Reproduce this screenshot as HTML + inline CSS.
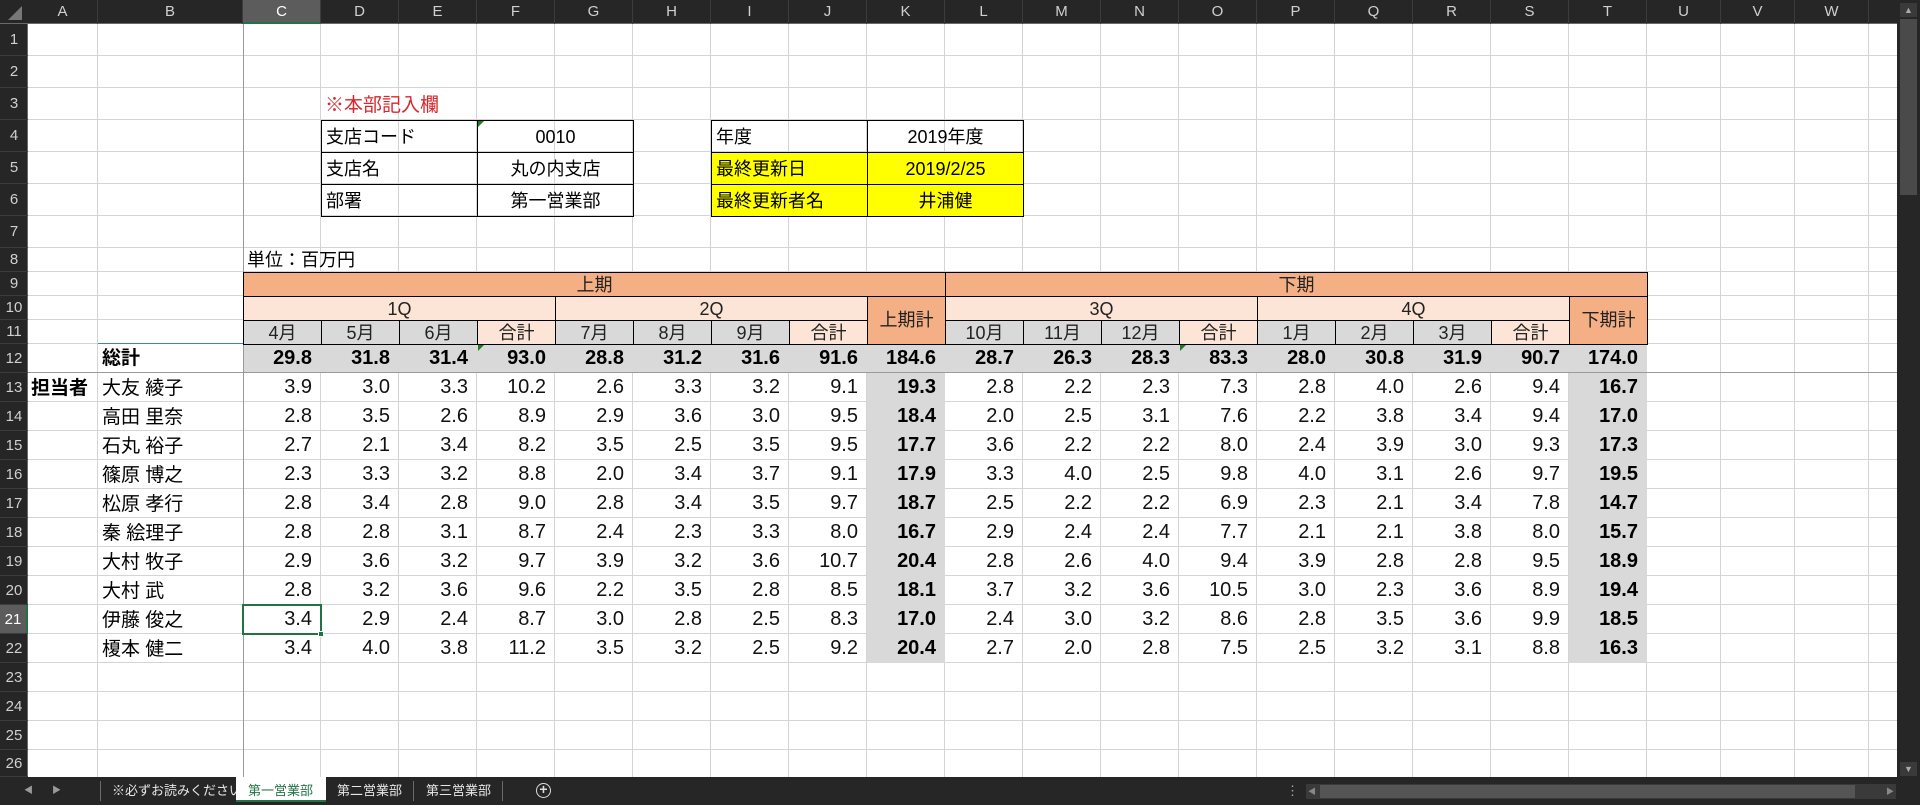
<!DOCTYPE html>
<html><head><meta charset="utf-8">
<style>
*{margin:0;padding:0;box-sizing:border-box}
body{width:1920px;height:805px;overflow:hidden;background:#fff;position:relative;font-family:"Liberation Sans","Noto Sans CJK JP",sans-serif;color:#000}
.a{position:absolute}
.vl{position:absolute;top:24px;height:753px;width:1px;background:#d4d4d4}
.hl{position:absolute;left:28px;width:1869px;height:1px;background:#d4d4d4}
.colh{position:absolute;top:0;height:24px;color:#d0d0d0;font-size:15px;line-height:24px;text-align:center;border-right:1px solid #3c3c3c}
.rowh{position:absolute;left:0;width:28px;color:#d0d0d0;font-size:15px;text-align:center;border-bottom:1px solid #3c3c3c;display:flex;align-items:center;justify-content:center}
.r{position:absolute;left:243px;display:flex;height:29px;font-family:"Liberation Sans Narrow","Liberation Sans",sans-serif;font-size:20px;line-height:1;color:#111}
.r span{width:78px;text-align:right;padding-right:9px;display:flex;align-items:flex-end;justify-content:flex-end;padding-bottom:5px}
.r span.b{font-weight:bold;color:#000}
.jp{font-family:"Liberation Sans","Noto Sans CJK JP",sans-serif;font-size:19px;line-height:1}
.box{position:absolute;border:1px solid #000;display:flex;align-items:center;font-family:"Liberation Sans","Noto Sans CJK JP",sans-serif;font-size:18px;line-height:1}
.hd{position:absolute;border:1px solid #000;display:flex;align-items:flex-end;justify-content:center;padding-bottom:2px;font-family:"Liberation Sans","Noto Sans CJK JP",sans-serif;font-size:18px;line-height:1;color:#222}
.or{background:#f4b084}.lt{background:#fce4d6}.gr{background:#d9d9d9}.ye{background:#ffff00}
.nm{position:absolute;left:102px;font-family:"Liberation Sans","Noto Sans CJK JP",sans-serif;font-size:19px;line-height:1}
.tri{position:absolute;width:0;height:0;border-top:6px solid #1e7b1e;border-right:6px solid transparent}
.tab{position:absolute;top:777px;height:28px;color:#e6e6e6;font-size:13px;line-height:27px;font-family:"Liberation Sans","Noto Sans CJK JP",sans-serif;white-space:nowrap}
</style></head><body>

<div class="vl" style="left:97px"></div>
<div class="vl" style="left:320px"></div><div class="vl" style="left:398px"></div><div class="vl" style="left:476px"></div><div class="vl" style="left:554px"></div><div class="vl" style="left:632px"></div><div class="vl" style="left:710px"></div><div class="vl" style="left:788px"></div><div class="vl" style="left:866px"></div><div class="vl" style="left:944px"></div><div class="vl" style="left:1022px"></div><div class="vl" style="left:1100px"></div><div class="vl" style="left:1178px"></div><div class="vl" style="left:1256px"></div><div class="vl" style="left:1334px"></div><div class="vl" style="left:1412px"></div><div class="vl" style="left:1490px"></div><div class="vl" style="left:1568px"></div><div class="vl" style="left:1646px"></div><div class="vl" style="left:1720px"></div><div class="vl" style="left:1794px"></div><div class="vl" style="left:1868px"></div>
<div class="hl" style="top:55px"></div><div class="hl" style="top:87px"></div><div class="hl" style="top:119px"></div><div class="hl" style="top:151px"></div><div class="hl" style="top:183px"></div><div class="hl" style="top:215px"></div><div class="hl" style="top:247px"></div><div class="hl" style="top:271px"></div><div class="hl" style="top:295px"></div><div class="hl" style="top:319px"></div><div class="hl" style="top:343px"></div>
<div class="hl" style="top:401px"></div><div class="hl" style="top:430px"></div><div class="hl" style="top:459px"></div><div class="hl" style="top:488px"></div><div class="hl" style="top:517px"></div><div class="hl" style="top:546px"></div><div class="hl" style="top:575px"></div><div class="hl" style="top:604px"></div><div class="hl" style="top:633px"></div><div class="hl" style="top:662px"></div><div class="hl" style="top:691px"></div><div class="hl" style="top:720px"></div><div class="hl" style="top:749px"></div>

<div class="a gr" style="left:243px;top:344px;width:1404px;height:29px"></div>
<div class="a gr" style="left:867px;top:373px;width:78px;height:290px"></div>
<div class="a gr" style="left:1569px;top:373px;width:78px;height:290px"></div>

<div class="a" style="left:243px;top:24px;width:1px;height:753px;background:#9a9a9a"></div>
<div class="a" style="left:28px;top:372px;width:1869px;height:1px;background:#9a9a9a"></div>
<div class="a" style="left:98px;top:343px;width:145px;height:1px;background:#4a7ccc"></div>

<div class="a jp" style="left:325px;top:96px;color:#d9262b;font-size:19px">※本部記入欄</div>

<div class="box" style="left:321px;top:120px;width:157px;height:33px;padding-left:4px">支店コード</div>
<div class="box" style="left:477px;top:120px;width:157px;height:33px;justify-content:center">0010</div>
<div class="box" style="left:321px;top:152px;width:157px;height:33px;padding-left:4px">支店名</div>
<div class="box" style="left:477px;top:152px;width:157px;height:33px;justify-content:center">丸の内支店</div>
<div class="box" style="left:321px;top:184px;width:157px;height:33px;padding-left:4px">部署</div>
<div class="box" style="left:477px;top:184px;width:157px;height:33px;justify-content:center">第一営業部</div>
<div class="tri" style="left:478px;top:121px"></div>

<div class="box" style="left:711px;top:120px;width:157px;height:33px;padding-left:4px">年度</div>
<div class="box" style="left:867px;top:120px;width:157px;height:33px;justify-content:center">2019年度</div>
<div class="box ye" style="left:711px;top:152px;width:157px;height:33px;padding-left:4px">最終更新日</div>
<div class="box ye" style="left:867px;top:152px;width:157px;height:33px;justify-content:center">2019/2/25</div>
<div class="box ye" style="left:711px;top:184px;width:157px;height:33px;padding-left:4px">最終更新者名</div>
<div class="box ye" style="left:867px;top:184px;width:157px;height:33px;justify-content:center">井浦健</div>

<div class="a jp" style="left:247px;top:251px;font-size:18px">単位：百万円</div>

<div class="hd or" style="left:243px;top:272px;width:703px;height:25px">上期</div>
<div class="hd or" style="left:945px;top:272px;width:703px;height:25px">下期</div>
<div class="hd lt" style="left:243px;top:296px;width:313px;height:25px">1Q</div>
<div class="hd lt" style="left:555px;top:296px;width:313px;height:25px">2Q</div>
<div class="hd or" style="left:867px;top:296px;width:79px;height:49px;align-items:center">上期計</div>
<div class="hd lt" style="left:945px;top:296px;width:313px;height:25px">3Q</div>
<div class="hd lt" style="left:1257px;top:296px;width:313px;height:25px">4Q</div>
<div class="hd or" style="left:1569px;top:296px;width:79px;height:49px;align-items:center">下期計</div>

<div class="hd gr" style="left:243px;top:320px;width:79px;height:25px">4月</div>
<div class="hd gr" style="left:321px;top:320px;width:79px;height:25px">5月</div>
<div class="hd gr" style="left:399px;top:320px;width:79px;height:25px">6月</div>
<div class="hd lt" style="left:477px;top:320px;width:79px;height:25px">合計</div>
<div class="hd gr" style="left:555px;top:320px;width:79px;height:25px">7月</div>
<div class="hd gr" style="left:633px;top:320px;width:79px;height:25px">8月</div>
<div class="hd gr" style="left:711px;top:320px;width:79px;height:25px">9月</div>
<div class="hd lt" style="left:789px;top:320px;width:79px;height:25px">合計</div>
<div class="hd gr" style="left:945px;top:320px;width:79px;height:25px">10月</div>
<div class="hd gr" style="left:1023px;top:320px;width:79px;height:25px">11月</div>
<div class="hd gr" style="left:1101px;top:320px;width:79px;height:25px">12月</div>
<div class="hd lt" style="left:1179px;top:320px;width:79px;height:25px">合計</div>
<div class="hd gr" style="left:1257px;top:320px;width:79px;height:25px">1月</div>
<div class="hd gr" style="left:1335px;top:320px;width:79px;height:25px">2月</div>
<div class="hd gr" style="left:1413px;top:320px;width:79px;height:25px">3月</div>
<div class="hd lt" style="left:1491px;top:320px;width:79px;height:25px">合計</div>
<div class="tri" style="left:478px;top:345px"></div>
<div class="tri" style="left:1180px;top:345px"></div>

<div class="nm" style="top:349px;font-weight:bold">総計</div>
<div class="r" style="top:344px"><span class="b">29.8</span><span class="b">31.8</span><span class="b">31.4</span><span class="b">93.0</span><span class="b">28.8</span><span class="b">31.2</span><span class="b">31.6</span><span class="b">91.6</span><span class="b">184.6</span><span class="b">28.7</span><span class="b">26.3</span><span class="b">28.3</span><span class="b">83.3</span><span class="b">28.0</span><span class="b">30.8</span><span class="b">31.9</span><span class="b">90.7</span><span class="b">174.0</span></div>

<div class="a jp" style="left:31px;top:379px;font-weight:bold;font-size:19px">担当者</div>

<div class="nm" style="top:379px">大友 綾子</div>
<div class="r" style="top:373px"><span>3.9</span><span>3.0</span><span>3.3</span><span>10.2</span><span>2.6</span><span>3.3</span><span>3.2</span><span>9.1</span><span class="b">19.3</span><span>2.8</span><span>2.2</span><span>2.3</span><span>7.3</span><span>2.8</span><span>4.0</span><span>2.6</span><span>9.4</span><span class="b">16.7</span></div>
<div class="nm" style="top:408px">高田 里奈</div>
<div class="r" style="top:402px"><span>2.8</span><span>3.5</span><span>2.6</span><span>8.9</span><span>2.9</span><span>3.6</span><span>3.0</span><span>9.5</span><span class="b">18.4</span><span>2.0</span><span>2.5</span><span>3.1</span><span>7.6</span><span>2.2</span><span>3.8</span><span>3.4</span><span>9.4</span><span class="b">17.0</span></div>
<div class="nm" style="top:437px">石丸 裕子</div>
<div class="r" style="top:431px"><span>2.7</span><span>2.1</span><span>3.4</span><span>8.2</span><span>3.5</span><span>2.5</span><span>3.5</span><span>9.5</span><span class="b">17.7</span><span>3.6</span><span>2.2</span><span>2.2</span><span>8.0</span><span>2.4</span><span>3.9</span><span>3.0</span><span>9.3</span><span class="b">17.3</span></div>
<div class="nm" style="top:466px">篠原 博之</div>
<div class="r" style="top:460px"><span>2.3</span><span>3.3</span><span>3.2</span><span>8.8</span><span>2.0</span><span>3.4</span><span>3.7</span><span>9.1</span><span class="b">17.9</span><span>3.3</span><span>4.0</span><span>2.5</span><span>9.8</span><span>4.0</span><span>3.1</span><span>2.6</span><span>9.7</span><span class="b">19.5</span></div>
<div class="nm" style="top:495px">松原 孝行</div>
<div class="r" style="top:489px"><span>2.8</span><span>3.4</span><span>2.8</span><span>9.0</span><span>2.8</span><span>3.4</span><span>3.5</span><span>9.7</span><span class="b">18.7</span><span>2.5</span><span>2.2</span><span>2.2</span><span>6.9</span><span>2.3</span><span>2.1</span><span>3.4</span><span>7.8</span><span class="b">14.7</span></div>
<div class="nm" style="top:524px">秦 絵理子</div>
<div class="r" style="top:518px"><span>2.8</span><span>2.8</span><span>3.1</span><span>8.7</span><span>2.4</span><span>2.3</span><span>3.3</span><span>8.0</span><span class="b">16.7</span><span>2.9</span><span>2.4</span><span>2.4</span><span>7.7</span><span>2.1</span><span>2.1</span><span>3.8</span><span>8.0</span><span class="b">15.7</span></div>
<div class="nm" style="top:553px">大村 牧子</div>
<div class="r" style="top:547px"><span>2.9</span><span>3.6</span><span>3.2</span><span>9.7</span><span>3.9</span><span>3.2</span><span>3.6</span><span>10.7</span><span class="b">20.4</span><span>2.8</span><span>2.6</span><span>4.0</span><span>9.4</span><span>3.9</span><span>2.8</span><span>2.8</span><span>9.5</span><span class="b">18.9</span></div>
<div class="nm" style="top:582px">大村 武</div>
<div class="r" style="top:576px"><span>2.8</span><span>3.2</span><span>3.6</span><span>9.6</span><span>2.2</span><span>3.5</span><span>2.8</span><span>8.5</span><span class="b">18.1</span><span>3.7</span><span>3.2</span><span>3.6</span><span>10.5</span><span>3.0</span><span>2.3</span><span>3.6</span><span>8.9</span><span class="b">19.4</span></div>
<div class="nm" style="top:611px">伊藤 俊之</div>
<div class="r" style="top:605px"><span>3.4</span><span>2.9</span><span>2.4</span><span>8.7</span><span>3.0</span><span>2.8</span><span>2.5</span><span>8.3</span><span class="b">17.0</span><span>2.4</span><span>3.0</span><span>3.2</span><span>8.6</span><span>2.8</span><span>3.5</span><span>3.6</span><span>9.9</span><span class="b">18.5</span></div>
<div class="nm" style="top:640px">榎本 健二</div>
<div class="r" style="top:634px"><span>3.4</span><span>4.0</span><span>3.8</span><span>11.2</span><span>3.5</span><span>3.2</span><span>2.5</span><span>9.2</span><span class="b">20.4</span><span>2.7</span><span>2.0</span><span>2.8</span><span>7.5</span><span>2.5</span><span>3.2</span><span>3.1</span><span>8.8</span><span class="b">16.3</span></div>

<div class="a" style="left:242px;top:604px;width:80px;height:31px;border:2px solid #217346"></div>
<div class="a" style="left:318px;top:631px;width:6px;height:6px;background:#217346;border:1px solid #fff"></div>

<div class="a" style="left:0;top:0;width:1920px;height:24px;background:#262626"></div>
<div class="a" style="left:0;top:23px;width:1897px;height:1px;background:#6a6a6a"></div>
<div class="a" style="left:8px;top:6px;width:0;height:0;border-left:14px solid transparent;border-bottom:14px solid #777"></div>
<div class="colh" style="left:28px;width:70px">A</div>
<div class="colh" style="left:98px;width:145px">B</div>
<div class="colh" style="left:243px;width:78px;background:#5c5c5c;color:#fff;border-bottom:2px solid #217346">C</div>
<div class="colh" style="left:321px;width:78px">D</div><div class="colh" style="left:399px;width:78px">E</div><div class="colh" style="left:477px;width:78px">F</div><div class="colh" style="left:555px;width:78px">G</div><div class="colh" style="left:633px;width:78px">H</div><div class="colh" style="left:711px;width:78px">I</div><div class="colh" style="left:789px;width:78px">J</div><div class="colh" style="left:867px;width:78px">K</div><div class="colh" style="left:945px;width:78px">L</div><div class="colh" style="left:1023px;width:78px">M</div><div class="colh" style="left:1101px;width:78px">N</div><div class="colh" style="left:1179px;width:78px">O</div><div class="colh" style="left:1257px;width:78px">P</div><div class="colh" style="left:1335px;width:78px">Q</div><div class="colh" style="left:1413px;width:78px">R</div><div class="colh" style="left:1491px;width:78px">S</div><div class="colh" style="left:1569px;width:78px">T</div><div class="colh" style="left:1647px;width:74px">U</div><div class="colh" style="left:1721px;width:74px">V</div><div class="colh" style="left:1795px;width:74px">W</div>

<div class="a" style="left:0;top:24px;width:28px;height:753px;background:#262626"></div>
<div class="a" style="left:27px;top:24px;width:1px;height:753px;background:#6a6a6a"></div>
<div class="rowh" style="top:24px;height:32px">1</div><div class="rowh" style="top:56px;height:32px">2</div><div class="rowh" style="top:88px;height:32px">3</div><div class="rowh" style="top:120px;height:32px">4</div><div class="rowh" style="top:152px;height:32px">5</div><div class="rowh" style="top:184px;height:32px">6</div><div class="rowh" style="top:216px;height:32px">7</div><div class="rowh" style="top:248px;height:24px">8</div><div class="rowh" style="top:272px;height:24px">9</div><div class="rowh" style="top:296px;height:24px">10</div><div class="rowh" style="top:320px;height:24px">11</div><div class="rowh" style="top:344px;height:29px">12</div><div class="rowh" style="top:373px;height:29px">13</div><div class="rowh" style="top:402px;height:29px">14</div><div class="rowh" style="top:431px;height:29px">15</div><div class="rowh" style="top:460px;height:29px">16</div><div class="rowh" style="top:489px;height:29px">17</div><div class="rowh" style="top:518px;height:29px">18</div><div class="rowh" style="top:547px;height:29px">19</div><div class="rowh" style="top:576px;height:29px">20</div><div class="rowh" style="top:605px;height:29px;background:#5c5c5c;color:#fff;border-right:2px solid #217346">21</div><div class="rowh" style="top:634px;height:29px">22</div><div class="rowh" style="top:663px;height:29px">23</div><div class="rowh" style="top:692px;height:29px">24</div><div class="rowh" style="top:721px;height:29px">25</div><div class="rowh" style="top:750px;height:27px">26</div>

<div class="a" style="left:1897px;top:0;width:23px;height:777px;background:#262626"></div>
<div class="a" style="left:1900px;top:3px;width:17px;height:14px;background:#3a3a3a;color:#aaa;font-size:9px;text-align:center;line-height:14px">▲</div>
<div class="a" style="left:1900px;top:19px;width:17px;height:176px;background:#4a4a4a"></div>
<div class="a" style="left:1900px;top:762px;width:17px;height:14px;background:#3a3a3a;color:#aaa;font-size:9px;text-align:center;line-height:14px">▼</div>

<div class="a" style="left:0;top:777px;width:1920px;height:28px;background:#262626"></div>
<div class="tab" style="left:24px;color:#9a9a9a;font-size:9px">◀</div>
<div class="tab" style="left:52px;color:#9a9a9a;font-size:9px">▶</div>
<div class="a" style="left:100px;top:781px;width:1px;height:20px;background:#6a6a6a"></div>
<div class="tab" style="left:112px">※必ずお読みください</div>
<div class="a" style="left:236px;top:777px;width:90px;height:25px;background:#fff;border-bottom:2px solid #217346"></div>
<div class="tab" style="left:248px;color:#217346">第一営業部</div>
<div class="tab" style="left:337px">第二営業部</div>
<div class="a" style="left:413px;top:781px;width:1px;height:20px;background:#6a6a6a"></div>
<div class="tab" style="left:426px">第三営業部</div>
<div class="a" style="left:502px;top:781px;width:1px;height:20px;background:#6a6a6a"></div>
<div class="a" style="left:536px;top:783px;width:15px;height:15px;border:1.5px solid #ddd;border-radius:50%;color:#ddd;font-size:14px;line-height:11px;text-align:center;font-weight:bold">+</div>
<div class="tab" style="left:1286px;color:#aaa">⋮</div>
<div class="a" style="left:1306px;top:784px;width:590px;height:15px;background:#3a3a3a"></div>
<div class="a" style="left:1320px;top:785px;width:535px;height:13px;background:#555"></div>
<div class="a" style="left:1308px;top:784px;color:#888;font-size:8px;line-height:15px">◀</div>
<div class="a" style="left:1886px;top:784px;color:#888;font-size:8px;line-height:15px">▶</div>
</body></html>
